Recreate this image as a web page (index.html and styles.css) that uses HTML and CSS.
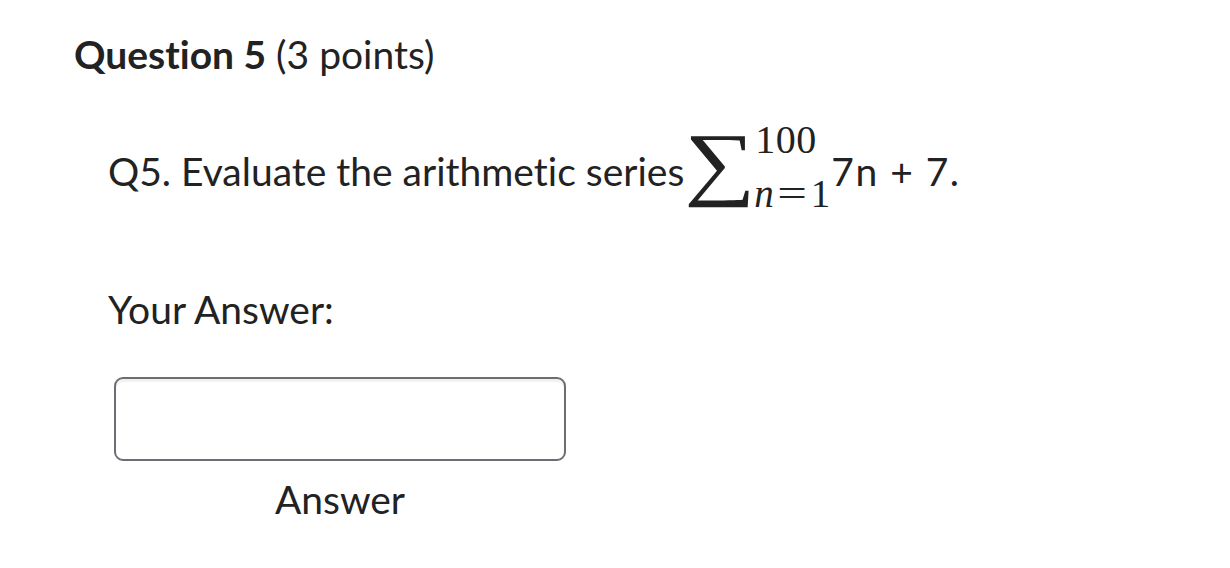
FILE: index.html
```html
<!DOCTYPE html>
<html lang="en">
<head>
<meta charset="utf-8">
<title>Question 5</title>
<link rel="stylesheet" href="styles.css">
</head>
<body>
<div class="page">
  <h2 class="qtitle"><strong>Question 5</strong> (3 points)</h2>
  <div class="qbody">
    <div class="prompt">
      <span class="ptext">Q5. Evaluate the arithmetic series</span>
      <span class="math">
        <span class="sigma">∑</span>
        <span class="limits">
          <span class="sup">100</span>
          <span class="sub"><i>n</i><span class="eq">=</span>1</span>
        </span>
      </span>
      <span class="ptext tail">7n + 7.</span>
    </div>
    <p class="label">Your Answer:</p>
    <div class="answer">
      <input class="answer-input" type="text" aria-label="Answer">
      <div class="answer-label">Answer</div>
    </div>
  </div>
</div>
</body>
</html>
```
FILE: styles.css
```css
html, body {
  margin: 0;
  padding: 0;
  background: #ffffff;
}
body {
  font-family: Lato, "Noto Sans", sans-serif;
  color: #222222;
  font-variant-ligatures: none;
}
.page {
  padding: 31px 0 0 74px;
}
.qtitle {
  margin: 0;
  font-size: 39px;
  line-height: 47px;
  font-weight: 400;
}
.qtitle strong {
  font-weight: 700;
}
.qbody {
  padding-left: 34px;
}
.prompt {
  margin-top: 46px;
  display: flex;
  align-items: flex-start;
  font-size: 39px;
  line-height: 47px;
}
.ptext {
  margin-top: 24px;
  white-space: pre;
}
.tail {
  letter-spacing: 1.5px;
}
.math {
  display: flex;
  align-items: flex-start;
  margin-left: 0;
  margin-right: 1px;
  font-family: "Liberation Serif", "DejaVu Serif", serif;
}
.sigma {
  display: block;
  width: 72px;
  margin-top: -2px;
  font-size: 82px;
  line-height: 82px;
  transform: scaleX(1.22);
  transform-origin: left center;
}
.limits {
  display: flex;
  flex-direction: column;
  align-items: flex-start;
}
.sup {
  margin-left: -1px;
  font-size: 40px;
  line-height: 32px;
  letter-spacing: 0.5px;
}
.sub {
  margin-top: 18px;
  margin-left: -2px;
  font-size: 39px;
  line-height: 40px;
}
.sub i {
  font-style: italic;
}
.eq {
  display: inline-block;
  margin: 0 8px 0 7px;
  transform: scaleX(1.35);
}
.label {
  margin: 72px 0 0;
  font-size: 39px;
  line-height: 47px;
}
.answer {
  margin-top: 44px;
  margin-left: 6px;
  width: 452px;
  display: flex;
  flex-direction: column;
  align-items: center;
}
.answer-input {
  box-sizing: border-box;
  width: 452px;
  height: 84px;
  margin: 0;
  border: 2px solid #6b6f73;
  border-radius: 9px;
  box-shadow: inset 0 3px 2px rgba(0, 0, 0, 0.06);
  background: #ffffff;
  outline: none;
}
.answer-label {
  margin-top: 15px;
  font-size: 39px;
  line-height: 47px;
}
```
